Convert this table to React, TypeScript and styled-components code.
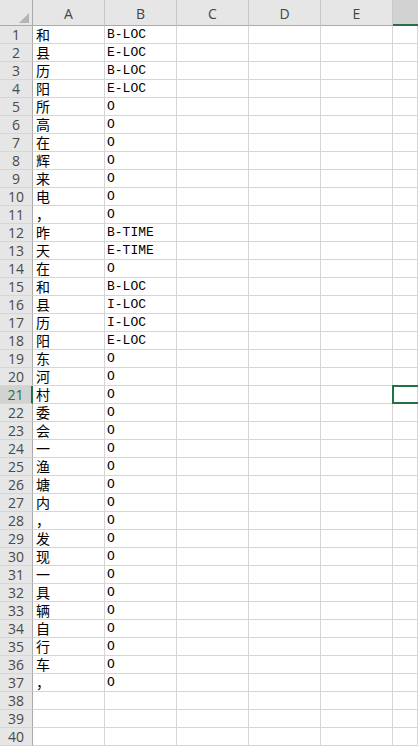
import React from "react";
import styled, { createGlobalStyle, css } from "styled-components";

const GlobalStyle = createGlobalStyle`
  html, body {
    margin: 0;
    padding: 0;
    background: #ffffff;
    overflow: hidden;
  }
  #root {
    width: 418px;
    height: 749px;
    overflow: hidden;
  }
`;

const GREEN = "#217346";
const COLS = ["A", "B", "C", "D", "E", ""];
const SELECTED_COL = 5; // F (its letter lies beyond the visible edge)
const SELECTED_ROW = 21;

const Sheet = styled.div`
  display: grid;
  grid-template-columns: 33px repeat(5, 72px) 25px;
  grid-auto-rows: 18px;
  grid-template-rows: 26px;
  width: 418px;
  background: #ffffff;
`;

const Corner = styled.div`
  box-sizing: border-box;
  background: #e6e6e6;
  border-right: 1px solid #ababab;
  border-bottom: 1px solid #ababab;
  display: flex;
  align-items: flex-end;
  justify-content: flex-end;
  padding: 0 3px 2px 0;
`;

const CornerTriangle = styled.span`
  width: 0;
  height: 0;
  border-left: 10px solid transparent;
  border-bottom: 10px solid #b5b5b5;
`;

const ColHeader = styled.div<{ $selected?: boolean }>`
  box-sizing: border-box;
  background: #e6e6e6;
  border-right: 1px solid #c8c8c8;
  border-bottom: 1px solid #ababab;
  display: flex;
  align-items: center;
  justify-content: center;
  font-family: "Open Sans", "Liberation Sans", sans-serif;
  font-size: 14px;
  color: #444444;
  padding-top: 1px;
  ${(p) =>
    p.$selected &&
    css`
      background: #d2d2d2;
      border-right: none;
      border-bottom: 2px solid ${GREEN};
      color: ${GREEN};
    `}
`;

const RowHeader = styled.div<{ $selected?: boolean }>`
  box-sizing: border-box;
  background: #e6e6e6;
  border-right: 1px solid #ababab;
  border-bottom: 1px solid #d6d6d6;
  display: flex;
  align-items: center;
  justify-content: center;
  font-family: "Open Sans", "Liberation Sans", sans-serif;
  font-size: 14px;
  line-height: 17px;
  color: #4a4a4a;
  ${(p) =>
    p.$selected &&
    css`
      background: #d2d2d2;
      border-right: 2px solid ${GREEN};
      color: ${GREEN};
    `}
`;

const Cell = styled.div<{ $kind?: "cjk" | "mono"; $selected?: boolean }>`
  position: relative;
  box-sizing: border-box;
  border-right: 1px solid #d6d6d6;
  border-bottom: 1px solid #d6d6d6;
  display: flex;
  align-items: flex-end;
  white-space: nowrap;
  color: #000000;
  ${(p) =>
    p.$kind === "cjk" &&
    css`
      font-family: "Noto Sans CJK SC", sans-serif;
      font-size: 14px;
      line-height: 17px;
      padding-left: 3px;
    `}
  ${(p) =>
    p.$kind === "mono" &&
    css`
      font-family: "Liberation Mono", monospace;
      font-size: 13px;
      line-height: 15px;
      padding-left: 2px;
      padding-bottom: 1px;
    `}
  ${(p) =>
    p.$selected &&
    css`
      &::after {
        content: "";
        position: absolute;
        top: -1px;
        left: -1px;
        right: -8px;
        bottom: -1px;
        border: 2px solid ${GREEN};
        pointer-events: none;
      }
    `}
`;

const DATA: [string, string][] = [
  ["和", "B-LOC"],
  ["县", "E-LOC"],
  ["历", "B-LOC"],
  ["阳", "E-LOC"],
  ["所", "O"],
  ["高", "O"],
  ["在", "O"],
  ["辉", "O"],
  ["来", "O"],
  ["电", "O"],
  ["，", "O"],
  ["昨", "B-TIME"],
  ["天", "E-TIME"],
  ["在", "O"],
  ["和", "B-LOC"],
  ["县", "I-LOC"],
  ["历", "I-LOC"],
  ["阳", "E-LOC"],
  ["东", "O"],
  ["河", "O"],
  ["村", "O"],
  ["委", "O"],
  ["会", "O"],
  ["一", "O"],
  ["渔", "O"],
  ["塘", "O"],
  ["内", "O"],
  ["，", "O"],
  ["发", "O"],
  ["现", "O"],
  ["一", "O"],
  ["具", "O"],
  ["辆", "O"],
  ["自", "O"],
  ["行", "O"],
  ["车", "O"],
  ["，", "O"],
  ["", ""],
  ["", ""],
  ["", ""],
];

export default function App() {
  return (
    <>
      <GlobalStyle />
      <Sheet>
        <Corner>
          <CornerTriangle />
        </Corner>
        {COLS.map((c, i) => (
          <ColHeader key={i} $selected={i === SELECTED_COL}>
            {c}
          </ColHeader>
        ))}
        {DATA.map(([a, b], r) => {
          const rowNum = r + 1;
          return (
            <React.Fragment key={rowNum}>
              <RowHeader $selected={rowNum === SELECTED_ROW}>{rowNum}</RowHeader>
              <Cell $kind="cjk">{a}</Cell>
              <Cell $kind="mono">{b}</Cell>
              <Cell />
              <Cell />
              <Cell />
              <Cell $selected={rowNum === SELECTED_ROW} />
            </React.Fragment>
          );
        })}
      </Sheet>
    </>
  );
}
